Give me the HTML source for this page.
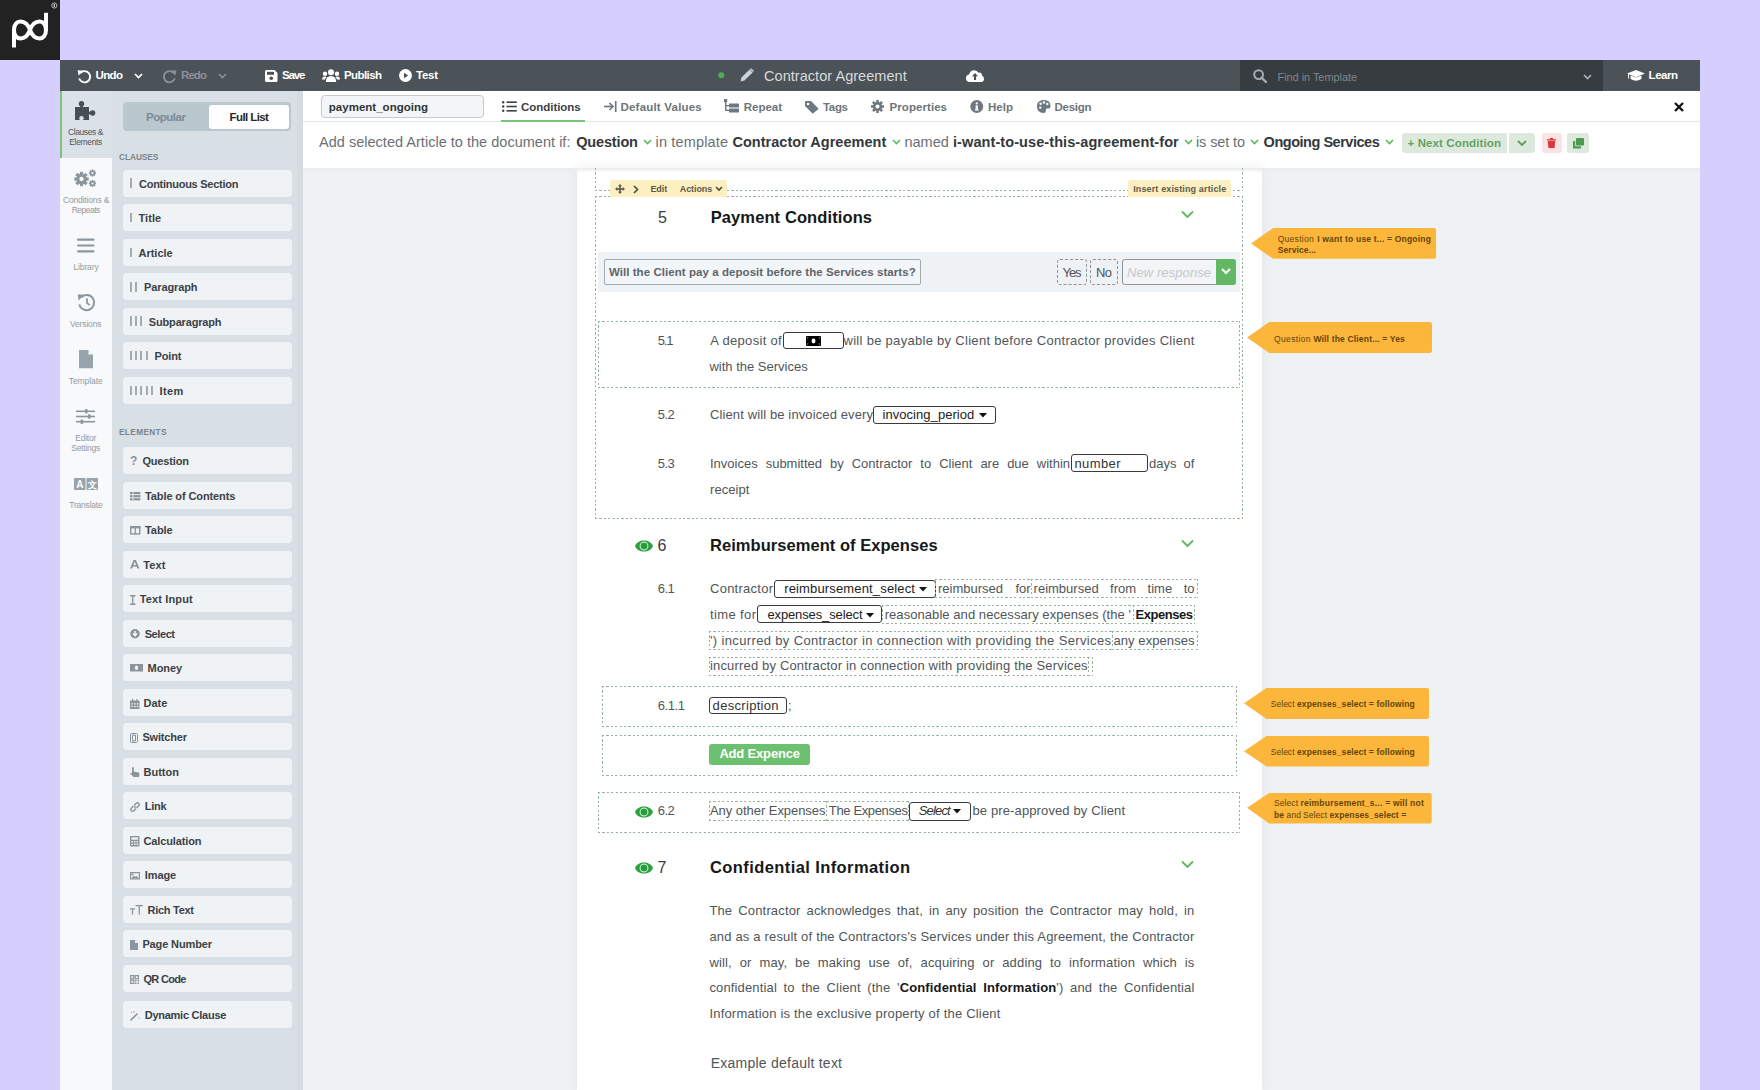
<!DOCTYPE html>
<html><head><meta charset="utf-8"><style>
html,body{margin:0;padding:0;}
body{width:1760px;height:1090px;overflow:hidden;position:relative;background:#d6cefc;font-family:"Liberation Sans", sans-serif;}
.t{position:absolute;white-space:pre;}
svg{overflow:visible}
</style></head><body>
<div style="position:absolute;left:0px;top:0px;width:60px;height:60px;background:#222223;"></div>
<svg style="position:absolute;left:0px;top:0px;" width="60" height="60" viewBox="0 0 60 60">
<g fill="none" stroke="#fff" stroke-width="4">
<path d="M14 47.5 V30"/>
<path d="M14 30 C14 18.5, 26 19, 30 30 C34 41, 46 41.5, 46 30 C46 18.5, 34 19, 30 30 C26 41, 14 41.5, 14 30"/>
<path d="M46 12.8 V31"/>
</g>
<circle cx="54.3" cy="5.5" r="2.6" fill="none" stroke="#c8c8c8" stroke-width="0.9"/>
<rect x="53.6" y="4.1" width="1.4" height="2.8" fill="#c8c8c8"/>
</svg>
<div style="position:absolute;left:60px;top:60px;width:1640px;height:31px;background:#4b5258;"></div>
<div style="position:absolute;left:1240px;top:60px;width:363px;height:31px;background:#363c40;"></div>
<div style="position:absolute;left:60px;top:91px;width:1640px;height:999px;background:#eff2f5;"></div>
<div style="position:absolute;left:60px;top:91px;width:52px;height:999px;background:#f7f9fa;"></div>
<div style="position:absolute;left:60px;top:91px;width:52px;height:67px;background:#dbe2e7;"></div>
<div style="position:absolute;left:60px;top:91px;width:2px;height:67px;background:#7cc47e;"></div>
<div style="position:absolute;left:112px;top:91px;width:191px;height:999px;background:#d8dfe5;"></div>
<div style="position:absolute;left:297px;top:91px;width:6px;height:999px;background:#d4dbe1;"></div>
<div style="position:absolute;left:303px;top:91px;width:1397px;height:77px;background:#fff;"></div>
<div style="position:absolute;left:303px;top:121px;width:1397px;height:1px;background:#e4e7ea;"></div>
<div style="position:absolute;left:321px;top:95px;width:163px;height:23px;background:#f3f5f7;border:1px solid #c3cad0;border-radius:4px;box-sizing:border-box;"></div>
<div style="position:absolute;left:501px;top:119.5px;width:84px;height:2.5px;background:#74c477;"></div>
<div style="position:absolute;left:123px;top:102px;width:168px;height:29px;background:#b9c7cf;border-radius:4px;"></div>
<div style="position:absolute;left:209px;top:105px;width:80px;height:24px;background:#fff;border-radius:3px;"></div>
<div style="position:absolute;left:123px;top:169.5px;width:169px;height:27.0px;background:#f0f3f5;border-radius:4px;"></div>
<div style="position:absolute;left:123px;top:204px;width:169px;height:27px;background:#f0f3f5;border-radius:4px;"></div>
<div style="position:absolute;left:123px;top:238.5px;width:169px;height:27.0px;background:#f0f3f5;border-radius:4px;"></div>
<div style="position:absolute;left:123px;top:273px;width:169px;height:27px;background:#f0f3f5;border-radius:4px;"></div>
<div style="position:absolute;left:123px;top:307.5px;width:169px;height:27.0px;background:#f0f3f5;border-radius:4px;"></div>
<div style="position:absolute;left:123px;top:342px;width:169px;height:27px;background:#f0f3f5;border-radius:4px;"></div>
<div style="position:absolute;left:123px;top:376.5px;width:169px;height:27.0px;background:#f0f3f5;border-radius:4px;"></div>
<div style="position:absolute;left:123px;top:447px;width:169px;height:27px;background:#f0f3f5;border-radius:4px;"></div>
<div style="position:absolute;left:123px;top:481.5px;width:169px;height:27.0px;background:#f0f3f5;border-radius:4px;"></div>
<div style="position:absolute;left:123px;top:516px;width:169px;height:27px;background:#f0f3f5;border-radius:4px;"></div>
<div style="position:absolute;left:123px;top:550.5px;width:169px;height:27.0px;background:#f0f3f5;border-radius:4px;"></div>
<div style="position:absolute;left:123px;top:585px;width:169px;height:27px;background:#f0f3f5;border-radius:4px;"></div>
<div style="position:absolute;left:123px;top:619.5px;width:169px;height:27.0px;background:#f0f3f5;border-radius:4px;"></div>
<div style="position:absolute;left:123px;top:654px;width:169px;height:27px;background:#f0f3f5;border-radius:4px;"></div>
<div style="position:absolute;left:123px;top:688.5px;width:169px;height:27.0px;background:#f0f3f5;border-radius:4px;"></div>
<div style="position:absolute;left:123px;top:723px;width:169px;height:27px;background:#f0f3f5;border-radius:4px;"></div>
<div style="position:absolute;left:123px;top:757.5px;width:169px;height:27.0px;background:#f0f3f5;border-radius:4px;"></div>
<div style="position:absolute;left:123px;top:792px;width:169px;height:27px;background:#f0f3f5;border-radius:4px;"></div>
<div style="position:absolute;left:123px;top:826.5px;width:169px;height:27.0px;background:#f0f3f5;border-radius:4px;"></div>
<div style="position:absolute;left:123px;top:861px;width:169px;height:27px;background:#f0f3f5;border-radius:4px;"></div>
<div style="position:absolute;left:123px;top:895.5px;width:169px;height:27.0px;background:#f0f3f5;border-radius:4px;"></div>
<div style="position:absolute;left:123px;top:930px;width:169px;height:27px;background:#f0f3f5;border-radius:4px;"></div>
<div style="position:absolute;left:123px;top:965px;width:169px;height:27px;background:#f0f3f5;border-radius:4px;"></div>
<div style="position:absolute;left:123px;top:1001px;width:169px;height:27px;background:#f0f3f5;border-radius:4px;"></div>
<div style="position:absolute;left:577px;top:168px;width:685px;height:922px;background:#fff;box-shadow:0 0 12px rgba(40,55,70,0.08);"></div>
<div style="position:absolute;left:709.4px;top:900.8px;width:485.1px;height:20px;line-height:20px;font-size:13px;color:#505559;letter-spacing:0.15px;text-align:justify;text-align-last:justify;white-space:nowrap;">The Contractor acknowledges that, in any position the Contractor may hold, in</div>
<div style="position:absolute;left:709.4px;top:926.7px;width:485.1px;height:20px;line-height:20px;font-size:13px;color:#505559;letter-spacing:0.15px;text-align:justify;text-align-last:justify;white-space:nowrap;">and as a result of the Contractors's Services under this Agreement, the Contractor</div>
<div style="position:absolute;left:709.4px;top:952.5px;width:485.1px;height:20px;line-height:20px;font-size:13px;color:#505559;letter-spacing:0.15px;text-align:justify;text-align-last:justify;white-space:nowrap;">will, or may, be making use of, acquiring or adding to information which is</div>
<div style="position:absolute;left:709.4px;top:978.4px;width:485.1px;height:20px;line-height:20px;font-size:13px;color:#505559;letter-spacing:0.15px;text-align:justify;text-align-last:justify;white-space:nowrap;">confidential to the Client (the '<b style="color:#161819">Confidential Information</b>') and the Confidential</div>
<div style="position:absolute;left:303px;top:168px;width:1397px;height:5px;background:linear-gradient(#e9ebed,rgba(239,242,245,0));"></div>
<svg style="position:absolute;left:595px;top:168px;" width="648" height="23" viewBox="0 0 648 23"><g stroke="#98b59a" stroke-width="1" stroke-dasharray="2.2 2.2" shape-rendering="crispEdges"><line x1="0" y1="22.5" x2="648" y2="22.5"/><line x1="0.5" y1="0" x2="0.5" y2="23"/><line x1="647.5" y1="0" x2="647.5" y2="23"/></g></svg>
<svg style="position:absolute;left:595px;top:196px;" width="648" height="323" viewBox="0 0 648 323"><g stroke="#98b59a" stroke-width="1" stroke-dasharray="2.2 2.2" shape-rendering="crispEdges"><line x1="0" y1="0.5" x2="648" y2="0.5"/><line x1="0" y1="322.5" x2="648" y2="322.5"/><line x1="0.5" y1="0" x2="0.5" y2="323"/><line x1="647.5" y1="0" x2="647.5" y2="323"/></g></svg>
<div style="position:absolute;left:610px;top:180px;width:117px;height:17px;background:#fcefc1;border-radius:3px 3px 0 0;"></div>
<div style="position:absolute;left:1128px;top:180px;width:103px;height:17px;background:#fcefc1;border-radius:3px 3px 0 0;"></div>
<div style="position:absolute;left:598px;top:252px;width:642px;height:40px;background:#eef2f5;"></div>
<div style="position:absolute;left:604px;top:259px;width:317px;height:26px;background:#f3f6f8;border:1px solid #a3abb1;border-radius:2px;box-sizing:border-box;"></div>
<div style="position:absolute;left:1057px;top:259px;width:30px;height:26px;border:1px dashed #8d9296;border-radius:3px;box-sizing:border-box;"></div>
<div style="position:absolute;left:1090px;top:259px;width:28px;height:26px;border:1px dashed #8d9296;border-radius:3px;box-sizing:border-box;"></div>
<div style="position:absolute;left:1122px;top:259px;width:114px;height:26px;background:#f2f4f6;border:1.5px solid #8e959a;border-radius:3px;box-sizing:border-box;"></div>
<div style="position:absolute;left:1216px;top:259px;width:20px;height:26px;background:#62b865;border-radius:0 3px 3px 0;"></div>
<svg style="position:absolute;left:1221px;top:268px;" width="10" height="7" viewBox="0 0 10 7"><path d="M1 1 L5 5 L9 1" fill="none" stroke="#fff" stroke-width="2"/></svg>
<svg style="position:absolute;left:598px;top:321px;" width="642" height="67" viewBox="0 0 642 67"><g stroke="#98b59a" stroke-width="1" stroke-dasharray="2.2 2.2" shape-rendering="crispEdges"><line x1="0" y1="0.5" x2="642" y2="0.5"/><line x1="0" y1="66.5" x2="642" y2="66.5"/><line x1="0.5" y1="0" x2="0.5" y2="67"/><line x1="641.5" y1="0" x2="641.5" y2="67"/></g></svg>
<div style="position:absolute;left:783px;top:332px;width:61px;height:17px;border:1px solid #3a3a3a;border-radius:3px;box-sizing:border-box;background:#fff;"></div>
<div style="position:absolute;left:873px;top:406px;width:123px;height:18px;border:1px solid #3a3a3a;border-radius:3px;box-sizing:border-box;background:#fff;"></div>
<div style="position:absolute;left:1071px;top:454px;width:77px;height:18px;border:1px solid #3a3a3a;border-radius:3px;box-sizing:border-box;background:#fff;"></div>
<div style="position:absolute;left:774px;top:580px;width:162px;height:18px;border:1px solid #3a3a3a;border-radius:3px;box-sizing:border-box;background:#fff;"></div>
<div style="position:absolute;left:757px;top:605px;width:125px;height:18px;border:1px solid #3a3a3a;border-radius:3px;box-sizing:border-box;background:#fff;"></div>
<div style="position:absolute;left:709px;top:697px;width:78px;height:17px;border:1px solid #3a3a3a;border-radius:3px;box-sizing:border-box;background:#fff;"></div>
<div style="position:absolute;left:909px;top:802px;width:62px;height:19px;border:1px solid #3a3a3a;border-radius:3px;box-sizing:border-box;background:#fff;"></div>
<svg style="position:absolute;left:935px;top:579px;" width="97" height="19" viewBox="0 0 97 19"><g stroke="#98b59a" stroke-width="1" stroke-dasharray="2.2 2.2" shape-rendering="crispEdges"><line x1="0" y1="0.5" x2="97" y2="0.5"/><line x1="0" y1="18.5" x2="97" y2="18.5"/><line x1="0.5" y1="0" x2="0.5" y2="19"/></g></svg>
<svg style="position:absolute;left:1031px;top:579px;" width="167" height="19" viewBox="0 0 167 19"><g stroke="#98b59a" stroke-width="1" stroke-dasharray="2.2 2.2" shape-rendering="crispEdges"><line x1="0" y1="0.5" x2="167" y2="0.5"/><line x1="0" y1="18.5" x2="167" y2="18.5"/><line x1="0.5" y1="0" x2="0.5" y2="19"/><line x1="166.5" y1="0" x2="166.5" y2="19"/></g></svg>
<svg style="position:absolute;left:882px;top:605px;" width="313" height="19" viewBox="0 0 313 19"><g stroke="#98b59a" stroke-width="1" stroke-dasharray="2.2 2.2" shape-rendering="crispEdges"><line x1="0" y1="0.5" x2="313" y2="0.5"/><line x1="0" y1="18.5" x2="313" y2="18.5"/><line x1="0.5" y1="0" x2="0.5" y2="19"/><line x1="312.5" y1="0" x2="312.5" y2="19"/></g></svg>
<svg style="position:absolute;left:1133px;top:605px;" width="62" height="19" viewBox="0 0 62 19"><g stroke="#98b59a" stroke-width="1" stroke-dasharray="2.2 2.2" shape-rendering="crispEdges"><line x1="0.5" y1="0" x2="0.5" y2="19"/></g></svg>
<svg style="position:absolute;left:709px;top:631px;" width="404" height="19" viewBox="0 0 404 19"><g stroke="#98b59a" stroke-width="1" stroke-dasharray="2.2 2.2" shape-rendering="crispEdges"><line x1="0" y1="0.5" x2="404" y2="0.5"/><line x1="0" y1="18.5" x2="404" y2="18.5"/><line x1="0.5" y1="0" x2="0.5" y2="19"/><line x1="403.5" y1="0" x2="403.5" y2="19"/></g></svg>
<svg style="position:absolute;left:1112px;top:631px;" width="86" height="19" viewBox="0 0 86 19"><g stroke="#98b59a" stroke-width="1" stroke-dasharray="2.2 2.2" shape-rendering="crispEdges"><line x1="0" y1="0.5" x2="86" y2="0.5"/><line x1="0" y1="18.5" x2="86" y2="18.5"/><line x1="85.5" y1="0" x2="85.5" y2="19"/></g></svg>
<svg style="position:absolute;left:709px;top:657px;" width="380" height="19" viewBox="0 0 380 19"><g stroke="#98b59a" stroke-width="1" stroke-dasharray="2.2 2.2" shape-rendering="crispEdges"><line x1="0" y1="0.5" x2="380" y2="0.5"/><line x1="0" y1="18.5" x2="380" y2="18.5"/><line x1="0.5" y1="0" x2="0.5" y2="19"/><line x1="379.5" y1="0" x2="379.5" y2="19"/></g></svg>
<svg style="position:absolute;left:1088px;top:657px;" width="5" height="19" viewBox="0 0 5 19"><g stroke="#98b59a" stroke-width="1" stroke-dasharray="2.2 2.2" shape-rendering="crispEdges"><line x1="0" y1="0.5" x2="5" y2="0.5"/><line x1="0" y1="18.5" x2="5" y2="18.5"/><line x1="4.5" y1="0" x2="4.5" y2="19"/></g></svg>
<svg style="position:absolute;left:602px;top:686px;" width="635" height="41" viewBox="0 0 635 41"><g stroke="#98b59a" stroke-width="1" stroke-dasharray="2.2 2.2" shape-rendering="crispEdges"><line x1="0" y1="0.5" x2="635" y2="0.5"/><line x1="0" y1="40.5" x2="635" y2="40.5"/><line x1="0.5" y1="0" x2="0.5" y2="41"/><line x1="634.5" y1="0" x2="634.5" y2="41"/></g></svg>
<svg style="position:absolute;left:602px;top:735px;" width="635" height="41" viewBox="0 0 635 41"><g stroke="#98b59a" stroke-width="1" stroke-dasharray="2.2 2.2" shape-rendering="crispEdges"><line x1="0" y1="0.5" x2="635" y2="0.5"/><line x1="0" y1="40.5" x2="635" y2="40.5"/><line x1="0.5" y1="0" x2="0.5" y2="41"/><line x1="634.5" y1="0" x2="634.5" y2="41"/></g></svg>
<div style="position:absolute;left:709px;top:744px;width:101px;height:21px;background:#6cc070;border-radius:3px;"></div>
<svg style="position:absolute;left:598px;top:792px;" width="642" height="41" viewBox="0 0 642 41"><g stroke="#98b59a" stroke-width="1" stroke-dasharray="2.2 2.2" shape-rendering="crispEdges"><line x1="0" y1="0.5" x2="642" y2="0.5"/><line x1="0" y1="40.5" x2="642" y2="40.5"/><line x1="0.5" y1="0" x2="0.5" y2="41"/><line x1="641.5" y1="0" x2="641.5" y2="41"/></g></svg>
<svg style="position:absolute;left:709px;top:801px;" width="118" height="20" viewBox="0 0 118 20"><g stroke="#98b59a" stroke-width="1" stroke-dasharray="2.2 2.2" shape-rendering="crispEdges"><line x1="0" y1="0.5" x2="118" y2="0.5"/><line x1="0" y1="19.5" x2="118" y2="19.5"/><line x1="0.5" y1="0" x2="0.5" y2="20"/><line x1="117.5" y1="0" x2="117.5" y2="20"/></g></svg>
<svg style="position:absolute;left:827px;top:801px;" width="82" height="20" viewBox="0 0 82 20"><g stroke="#98b59a" stroke-width="1" stroke-dasharray="2.2 2.2" shape-rendering="crispEdges"><line x1="0" y1="0.5" x2="82" y2="0.5"/><line x1="0" y1="19.5" x2="82" y2="19.5"/><line x1="81.5" y1="0" x2="81.5" y2="20"/></g></svg>
<svg style="position:absolute;left:1250.5px;top:228.4px;" width="185.0999999999999" height="30.799999999999983" viewBox="0 0 185.0999999999999 30.799999999999983"><path d="M0 15.400000000000006 L22.09999999999991 0 H183.0999999999999 Q185.0999999999999 0 185.0999999999999 2 V28.799999999999983 Q185.0999999999999 30.799999999999983 183.0999999999999 30.799999999999983 H22.09999999999991 Z" fill="#fbb63b"/></svg>
<svg style="position:absolute;left:1247.3px;top:322.3px;" width="185.0" height="30.899999999999977" viewBox="0 0 185.0 30.899999999999977"><path d="M0 15.5 L22.299999999999955 0 H183.0 Q185.0 0 185.0 2 V28.899999999999977 Q185.0 30.899999999999977 183.0 30.899999999999977 H22.299999999999955 Z" fill="#fbb63b"/></svg>
<svg style="position:absolute;left:1244px;top:687.6px;" width="185" height="30.899999999999977" viewBox="0 0 185 30.899999999999977"><path d="M0 15.199999999999932 L22.40000000000009 0 H183 Q185 0 185 2 V28.899999999999977 Q185 30.899999999999977 183 30.899999999999977 H22.40000000000009 Z" fill="#fbb63b"/></svg>
<svg style="position:absolute;left:1244px;top:736.2px;" width="185" height="30.399999999999977" viewBox="0 0 185 30.399999999999977"><path d="M0 15.299999999999955 L22.40000000000009 0 H183 Q185 0 185 2 V28.399999999999977 Q185 30.399999999999977 183 30.399999999999977 H22.40000000000009 Z" fill="#fbb63b"/></svg>
<svg style="position:absolute;left:1247.3px;top:793px;" width="184.70000000000005" height="30.600000000000023" viewBox="0 0 184.70000000000005 30.600000000000023"><path d="M0 14.799999999999955 L22.100000000000136 0 H182.70000000000005 Q184.70000000000005 0 184.70000000000005 2 V28.600000000000023 Q184.70000000000005 30.600000000000023 182.70000000000005 30.600000000000023 H22.100000000000136 Z" fill="#fbb63b"/></svg>
<svg style="position:absolute;left:635px;top:540px;" width="18" height="12" viewBox="0 0 18 12"><path d="M0 6 C2.8 -1.4, 15.2 -1.4, 18 6 C15.2 13.4, 2.8 13.4, 0 6 Z" fill="#2e9e43"/><circle cx="9" cy="6" r="3.9" fill="none" stroke="#b9efc2" stroke-width="1.1"/><circle cx="9" cy="6" r="2.9" fill="#2a9a3f"/></svg>
<svg style="position:absolute;left:635px;top:805.5px;" width="18" height="12" viewBox="0 0 18 12"><path d="M0 6 C2.8 -1.4, 15.2 -1.4, 18 6 C15.2 13.4, 2.8 13.4, 0 6 Z" fill="#2e9e43"/><circle cx="9" cy="6" r="3.9" fill="none" stroke="#b9efc2" stroke-width="1.1"/><circle cx="9" cy="6" r="2.9" fill="#2a9a3f"/></svg>
<svg style="position:absolute;left:635px;top:862px;" width="18" height="12" viewBox="0 0 18 12"><path d="M0 6 C2.8 -1.4, 15.2 -1.4, 18 6 C15.2 13.4, 2.8 13.4, 0 6 Z" fill="#2e9e43"/><circle cx="9" cy="6" r="3.9" fill="none" stroke="#b9efc2" stroke-width="1.1"/><circle cx="9" cy="6" r="2.9" fill="#2a9a3f"/></svg>
<svg style="position:absolute;left:1181px;top:210px;" width="13" height="9" viewBox="0 0 13 9"><path d="M1 1.5 L6.5 7 L12 1.5" fill="none" stroke="#5cb85c" stroke-width="1.8"/></svg>
<svg style="position:absolute;left:1181px;top:538.5px;" width="13" height="9" viewBox="0 0 13 9"><path d="M1 1.5 L6.5 7 L12 1.5" fill="none" stroke="#5cb85c" stroke-width="1.8"/></svg>
<svg style="position:absolute;left:1181px;top:860px;" width="13" height="9" viewBox="0 0 13 9"><path d="M1 1.5 L6.5 7 L12 1.5" fill="none" stroke="#5cb85c" stroke-width="1.8"/></svg>
<svg style="position:absolute;left:806px;top:336px;" width="15" height="10" viewBox="0 0 15 10"><rect x="0" y="0" width="15" height="10" rx="1" fill="#000"/><ellipse cx="7.5" cy="5" rx="2" ry="2.4" fill="#fff"/><rect x="1.2" y="1.2" width="1" height="1.5" fill="#888"/><rect x="12.8" y="1.2" width="1" height="1.5" fill="#888"/><rect x="1.2" y="7.3" width="1" height="1.5" fill="#888"/><rect x="12.8" y="7.3" width="1" height="1.5" fill="#888"/></svg>
<svg style="position:absolute;left:978.5px;top:413px;" width="8" height="5" viewBox="0 0 8 5"><path d="M0 0 H8 L4 4.5 Z" fill="#111"/></svg>
<svg style="position:absolute;left:918.5px;top:586.5px;" width="8" height="5" viewBox="0 0 8 5"><path d="M0 0 H8 L4 4.5 Z" fill="#111"/></svg>
<svg style="position:absolute;left:865.5px;top:612.5px;" width="8" height="5" viewBox="0 0 8 5"><path d="M0 0 H8 L4 4.5 Z" fill="#111"/></svg>
<svg style="position:absolute;left:953px;top:809px;" width="8" height="5" viewBox="0 0 8 5"><path d="M0 0 H8 L4 4.5 Z" fill="#111"/></svg>
<svg style="position:absolute;left:614.5px;top:183.5px;" width="10" height="10" viewBox="0 0 10 10"><g fill="#5a5a4a"><path d="M5 0 L7 2.3 H3 Z"/><path d="M5 10 L7 7.7 H3 Z"/><path d="M0 5 L2.3 3 V7 Z"/><path d="M10 5 L7.7 3 V7 Z"/><rect x="4.2" y="2" width="1.6" height="6"/><rect x="2" y="4.2" width="6" height="1.6"/></g></svg>
<svg style="position:absolute;left:633px;top:185px;" width="6" height="9" viewBox="0 0 6 9"><path d="M1 1 L4.5 4.5 L1 8" fill="none" stroke="#4a4a3e" stroke-width="1.6"/></svg>
<svg style="position:absolute;left:714.5px;top:186px;" width="8" height="6" viewBox="0 0 8 6"><path d="M1 1 L4 4 L7 1" fill="none" stroke="#4a4a3e" stroke-width="1.6"/></svg>
<svg style="position:absolute;left:77px;top:69px;" width="14" height="14" viewBox="0 0 14 14"><path d="M3.2 4.2 A5.6 5.6 0 1 1 2.2 9.5" fill="none" stroke="#fff" stroke-width="1.9"/><path d="M0.6 1.2 L6.4 1.8 L1.6 6.6 Z" fill="#fff"/></svg>
<svg style="position:absolute;left:133.5px;top:72.5px;" width="9" height="6" viewBox="0 0 9 6"><path d="M1 1 L4.5 4.5 L8 1" fill="none" stroke="#fff" stroke-width="1.7"/></svg>
<svg style="position:absolute;left:163px;top:69px;" width="14" height="14" viewBox="0 0 14 14"><path d="M10.8 4.2 A5.6 5.6 0 1 0 11.8 9.5" fill="none" stroke="#8b9197" stroke-width="1.9"/><path d="M13.4 1.2 L7.6 1.8 L12.4 6.6 Z" fill="#8b9197"/></svg>
<svg style="position:absolute;left:217.5px;top:72.5px;" width="9" height="6" viewBox="0 0 9 6"><path d="M1 1 L4.5 4.5 L8 1" fill="none" stroke="#8b9197" stroke-width="1.7"/></svg>
<svg style="position:absolute;left:265px;top:70px;" width="12.5" height="12" viewBox="0 0 12.5 12"><path d="M0 1.5 Q0 0 1.5 0 H9.5 L12.5 3 V10.5 Q12.5 12 11 12 H1.5 Q0 12 0 10.5 Z" fill="#fff"/><rect x="2" y="1.8" width="7" height="3" fill="#4b5258"/><circle cx="6.25" cy="8.3" r="1.8" fill="#4b5258"/></svg>
<svg style="position:absolute;left:322px;top:69px;" width="18" height="13" viewBox="0 0 18 13"><g fill="#fff"><circle cx="9" cy="3.2" r="3"/><path d="M3.8 13 Q3.8 7 9 7 Q14.2 7 14.2 13 Z"/><circle cx="3" cy="4.8" r="2.2"/><path d="M0 10.5 Q0 7.5 3 7.5 Q4 7.5 4.6 8 Q3 9.5 3 10.5 Z"/><circle cx="15" cy="4.8" r="2.2"/><path d="M18 10.5 Q18 7.5 15 7.5 Q14 7.5 13.4 8 Q15 9.5 15 10.5 Z"/></g></svg>
<svg style="position:absolute;left:398.5px;top:69px;" width="13" height="13" viewBox="0 0 13 13"><circle cx="6.5" cy="6.5" r="6.5" fill="#fff"/><path d="M5 3.8 L9.2 6.5 L5 9.2 Z" fill="#4b5258"/></svg>
<svg style="position:absolute;left:718px;top:72px;" width="6.5" height="6.5" viewBox="0 0 6.5 6.5"><circle cx="3.25" cy="3.25" r="3" fill="#4cae4f"/></svg>
<svg style="position:absolute;left:740px;top:68px;" width="14" height="14" viewBox="0 0 14 14"><path d="M0.5 13.5 L1.4 9.6 L9.6 1.4 L12.6 4.4 L4.4 12.6 Z" fill="#c9d3d9"/><path d="M10.3 0.7 Q11 0 11.7 0.7 L13.3 2.3 Q14 3 13.3 3.7 L12.9 4.1 L9.9 1.1 Z" fill="#c9d3d9"/></svg>
<svg style="position:absolute;left:966px;top:69px;" width="18" height="13" viewBox="0 0 18 13"><path d="M4 13 Q0 13 0 9.2 Q0 6 3.2 5.6 Q3.6 1.8 7.6 1.2 Q11 0.8 12.4 3.8 Q14.2 3 15.4 4.4 Q16.2 5.4 15.9 6.6 Q18 7.4 18 9.9 Q18 13 14.5 13 Z" fill="#fff"/><path d="M9 4 L12 7.3 H10.1 V11 H7.9 V7.3 H6 Z" fill="#4b5258"/></svg>
<svg style="position:absolute;left:1253px;top:69px;" width="14" height="14" viewBox="0 0 14 14"><circle cx="5.6" cy="5.6" r="4.4" fill="none" stroke="#a6adb2" stroke-width="2"/><path d="M8.8 8.8 L13 13" stroke="#a6adb2" stroke-width="2.4" stroke-linecap="round"/></svg>
<svg style="position:absolute;left:1582.5px;top:73.5px;" width="9" height="6" viewBox="0 0 9 6"><path d="M1 1 L4.5 4.5 L8 1" fill="none" stroke="#aab0b4" stroke-width="1.7"/></svg>
<svg style="position:absolute;left:1627px;top:70px;" width="18" height="11" viewBox="0 0 18 11"><path d="M9 0 L18 3.6 L9 7.2 L0 3.6 Z" fill="#fff"/><path d="M3.6 5.4 V9 Q9 12.5 14.4 9 V5.4 L9 7.6 Z" fill="#fff"/><path d="M1.6 4.2 V8.5" stroke="#fff" stroke-width="1"/></svg>
<svg style="position:absolute;left:1674px;top:102px;" width="10" height="10" viewBox="0 0 10 10"><path d="M1 1 L9 9 M9 1 L1 9" stroke="#111" stroke-width="2.3"/></svg>
<svg style="position:absolute;left:502px;top:101px;" width="15" height="11" viewBox="0 0 15 11"><g fill="#3c4247"><circle cx="1.2" cy="1.2" r="1.2"/><circle cx="1.2" cy="5.5" r="1.2"/><circle cx="1.2" cy="9.8" r="1.2"/><rect x="4.5" y="0.4" width="10.3" height="1.6"/><rect x="4.5" y="4.7" width="10.3" height="1.6"/><rect x="4.5" y="9" width="10.3" height="1.6"/></g></svg>
<svg style="position:absolute;left:603.5px;top:101px;" width="13" height="11" viewBox="0 0 13 11"><g fill="none" stroke="#6d7880" stroke-width="1.7"><path d="M0 5.5 H9"/><path d="M5.5 2 L9 5.5 L5.5 9"/><path d="M11.7 0 V11"/></g></svg>
<svg style="position:absolute;left:724px;top:99px;" width="15" height="14" viewBox="0 0 15 14"><g fill="#6d7880"><rect x="0" y="0" width="3.2" height="3.2"/><rect x="1" y="2" width="1.4" height="10"/><rect x="1" y="6" width="4" height="1.4"/><rect x="1" y="10.6" width="4" height="1.4"/><rect x="5" y="4.6" width="10" height="4" rx="0.6"/><rect x="5" y="9.4" width="10" height="4" rx="0.6"/></g></svg>
<svg style="position:absolute;left:805px;top:100.5px;" width="13.5" height="12.5" viewBox="0 0 13.5 12.5"><path d="M0 1 Q0 0 1 0 H6 L13.2 7.2 Q13.7 7.7 13.2 8.2 L8.2 12.2 Q7.7 12.7 7.2 12.2 L0 5 Z" fill="#6d7880"/><circle cx="3" cy="3" r="1.3" fill="#fff"/></svg>
<svg style="position:absolute;left:871px;top:100px;" width="13" height="13" viewBox="0 0 13 13"><g fill="#6d7880"><circle cx="6.5" cy="6.5" r="4.6"/><g stroke="#6d7880" stroke-width="2.6"><path d="M6.5 0 V13"/><path d="M0 6.5 H13"/><path d="M1.9 1.9 L11.1 11.1"/><path d="M11.1 1.9 L1.9 11.1"/></g></g><circle cx="6.5" cy="6.5" r="2" fill="#fff"/></svg>
<svg style="position:absolute;left:970px;top:100px;" width="13.5" height="13" viewBox="0 0 13.5 13"><circle cx="6.75" cy="6.5" r="6.5" fill="#6d7880"/><circle cx="6.75" cy="3.4" r="1.1" fill="#fff"/><rect x="5.6" y="5.4" width="2.3" height="4.4" fill="#fff"/><rect x="5" y="9.4" width="3.5" height="1.2" fill="#fff"/></svg>
<svg style="position:absolute;left:1036.5px;top:100px;" width="13.5" height="13" viewBox="0 0 13.5 13"><path d="M6.8 0 Q13.5 0 13.5 6 Q13.5 8.8 10.6 8.6 Q8.8 8.5 8.8 10 Q9.2 13 6.5 13 Q0 13 0 6.5 Q0 0 6.8 0 Z" fill="#6d7880"/><g fill="#fff"><circle cx="3.3" cy="7.6" r="1.2"/><circle cx="3.6" cy="3.8" r="1.2"/><circle cx="7" cy="2.5" r="1.2"/><circle cx="10.3" cy="4" r="1.2"/></g></svg>
<svg style="position:absolute;left:643px;top:139px;" width="9" height="6" viewBox="0 0 9 6"><path d="M1 1 L4.5 4.5 L8 1" fill="none" stroke="#5cb85c" stroke-width="1.6"/></svg>
<svg style="position:absolute;left:892px;top:139px;" width="9" height="6" viewBox="0 0 9 6"><path d="M1 1 L4.5 4.5 L8 1" fill="none" stroke="#5cb85c" stroke-width="1.6"/></svg>
<svg style="position:absolute;left:1184px;top:139px;" width="9" height="6" viewBox="0 0 9 6"><path d="M1 1 L4.5 4.5 L8 1" fill="none" stroke="#5cb85c" stroke-width="1.6"/></svg>
<svg style="position:absolute;left:1250px;top:139px;" width="9" height="6" viewBox="0 0 9 6"><path d="M1 1 L4.5 4.5 L8 1" fill="none" stroke="#5cb85c" stroke-width="1.6"/></svg>
<svg style="position:absolute;left:1384.5px;top:139px;" width="9" height="6" viewBox="0 0 9 6"><path d="M1 1 L4.5 4.5 L8 1" fill="none" stroke="#5cb85c" stroke-width="1.6"/></svg>
<div style="position:absolute;left:1402px;top:132.5px;width:105px;height:20.5px;background:#dde9dc;border-radius:3px 0 0 3px;"></div>
<div style="position:absolute;left:1509px;top:132.5px;width:25.5px;height:20.5px;background:#dde9dc;border-radius:0 3px 3px 0;"></div>
<svg style="position:absolute;left:1517px;top:140px;" width="10" height="6" viewBox="0 0 10 6"><path d="M1 1 L5 5 L9 1" fill="none" stroke="#5f9a62" stroke-width="1.8"/></svg>
<div style="position:absolute;left:1541.5px;top:132.5px;width:20.0px;height:20.5px;background:#fde2e4;border-radius:3px;"></div>
<svg style="position:absolute;left:1547px;top:138px;" width="9" height="10" viewBox="0 0 9 10"><path d="M0 1.2 H9 V2.4 H0 Z M3 0 H6 V1.2 H3 Z" fill="#d9383f"/><path d="M0.8 3 H8.2 L7.6 10 H1.4 Z" fill="#d9383f"/></svg>
<div style="position:absolute;left:1567px;top:132.5px;width:22px;height:20.5px;background:#dde9dc;border-radius:3px;"></div>
<svg style="position:absolute;left:1572.8px;top:137.7px;" width="11" height="10.5" viewBox="0 0 11 10.5"><rect x="3" y="0" width="8" height="7.5" rx="1" fill="#4c9a50"/><path d="M0 3.5 Q0 3 0.5 3 H2.2 V8.3 H8 V10 Q8 10.5 7.5 10.5 H0.5 Q0 10.5 0 10 Z" fill="#4c9a50"/></svg>
<svg style="position:absolute;left:75px;top:101px;" width="21" height="19" viewBox="0 0 21 19"><g fill="#474e54"><rect x="0" y="6" width="14" height="13"/><circle cx="6.5" cy="2.8" r="2.7"/><rect x="5.2" y="3" width="2.6" height="4"/><circle cx="17.6" cy="12" r="2.7"/><rect x="13" y="10.7" width="4" height="2.6"/></g><circle cx="6.5" cy="17.2" r="2.2" fill="#dbe2e7"/></svg>
<svg style="position:absolute;left:73.8px;top:169px;" width="24" height="18.5" viewBox="0 0 24 18.5"><circle cx="7.5" cy="10" r="5.184" fill="#8c969d"/><line x1="7.5" y1="10" x2="14.70" y2="10.00" stroke="#8c969d" stroke-width="3.24"/><line x1="7.5" y1="10" x2="12.59" y2="15.09" stroke="#8c969d" stroke-width="3.24"/><line x1="7.5" y1="10" x2="7.50" y2="17.20" stroke="#8c969d" stroke-width="3.24"/><line x1="7.5" y1="10" x2="2.41" y2="15.09" stroke="#8c969d" stroke-width="3.24"/><line x1="7.5" y1="10" x2="0.30" y2="10.00" stroke="#8c969d" stroke-width="3.24"/><line x1="7.5" y1="10" x2="2.41" y2="4.91" stroke="#8c969d" stroke-width="3.24"/><line x1="7.5" y1="10" x2="7.50" y2="2.80" stroke="#8c969d" stroke-width="3.24"/><line x1="7.5" y1="10" x2="12.59" y2="4.91" stroke="#8c969d" stroke-width="3.24"/><circle cx="7.5" cy="10" r="2.16" fill="#f7f9fa"/><circle cx="18.5" cy="4" r="2.592" fill="#8c969d"/><line x1="18.5" y1="4" x2="22.10" y2="4.00" stroke="#8c969d" stroke-width="1.62"/><line x1="18.5" y1="4" x2="21.05" y2="6.55" stroke="#8c969d" stroke-width="1.62"/><line x1="18.5" y1="4" x2="18.50" y2="7.60" stroke="#8c969d" stroke-width="1.62"/><line x1="18.5" y1="4" x2="15.95" y2="6.55" stroke="#8c969d" stroke-width="1.62"/><line x1="18.5" y1="4" x2="14.90" y2="4.00" stroke="#8c969d" stroke-width="1.62"/><line x1="18.5" y1="4" x2="15.95" y2="1.45" stroke="#8c969d" stroke-width="1.62"/><line x1="18.5" y1="4" x2="18.50" y2="0.40" stroke="#8c969d" stroke-width="1.62"/><line x1="18.5" y1="4" x2="21.05" y2="1.45" stroke="#8c969d" stroke-width="1.62"/><circle cx="18.5" cy="4" r="1.08" fill="#f7f9fa"/><circle cx="18.5" cy="14.5" r="2.592" fill="#8c969d"/><line x1="18.5" y1="14.5" x2="22.10" y2="14.50" stroke="#8c969d" stroke-width="1.62"/><line x1="18.5" y1="14.5" x2="21.05" y2="17.05" stroke="#8c969d" stroke-width="1.62"/><line x1="18.5" y1="14.5" x2="18.50" y2="18.10" stroke="#8c969d" stroke-width="1.62"/><line x1="18.5" y1="14.5" x2="15.95" y2="17.05" stroke="#8c969d" stroke-width="1.62"/><line x1="18.5" y1="14.5" x2="14.90" y2="14.50" stroke="#8c969d" stroke-width="1.62"/><line x1="18.5" y1="14.5" x2="15.95" y2="11.95" stroke="#8c969d" stroke-width="1.62"/><line x1="18.5" y1="14.5" x2="18.50" y2="10.90" stroke="#8c969d" stroke-width="1.62"/><line x1="18.5" y1="14.5" x2="21.05" y2="11.95" stroke="#8c969d" stroke-width="1.62"/><circle cx="18.5" cy="14.5" r="1.08" fill="#f7f9fa"/></svg>
<svg style="position:absolute;left:77.4px;top:238px;" width="17.5" height="15" viewBox="0 0 17.5 15"><g fill="#8c969d"><rect x="0" y="0.6" width="17.5" height="2.2" rx="1"/><rect x="0" y="6.4" width="17.5" height="2.2" rx="1"/><rect x="0" y="12.2" width="17.5" height="2.2" rx="1"/></g></svg>
<svg style="position:absolute;left:76.5px;top:293px;" width="19" height="19" viewBox="0 0 19 19"><path d="M4.2 4.2 A7.6 7.6 0 1 1 2.2 11.5" fill="none" stroke="#8c969d" stroke-width="2"/><path d="M0.8 1.2 L7.2 1.8 L1.6 7.6 Z" fill="#8c969d"/><path d="M10 5.2 V9.8 L12.6 12.2" fill="none" stroke="#8c969d" stroke-width="1.8"/></svg>
<svg style="position:absolute;left:79px;top:350.3px;" width="14" height="18.3" viewBox="0 0 14 18.3"><path d="M0 0 H9.5 L14 4.5 V18.3 H0 Z" fill="#98a4ab"/><path d="M9.5 0 V4.5 H14" fill="#f7f9fa"/></svg>
<svg style="position:absolute;left:76.2px;top:409px;" width="19" height="15" viewBox="0 0 19 15"><g fill="#8c969d"><rect x="0" y="1.5" width="19" height="1.6"/><rect x="0" y="6.7" width="19" height="1.6"/><rect x="0" y="11.9" width="19" height="1.6"/><rect x="9" y="0" width="2.6" height="4.6" rx="1"/><rect x="12" y="5.2" width="2.6" height="4.6" rx="1"/><rect x="4.5" y="10.4" width="2.6" height="4.6" rx="1"/></g></svg>
<svg style="position:absolute;left:74px;top:478px;" width="24" height="12" viewBox="0 0 24 12"><rect x="0" y="0" width="11.5" height="12" rx="1" fill="#98a4ab"/><rect x="12.5" y="0" width="11.5" height="12" rx="1" fill="#98a4ab"/><text x="5.75" y="10" font-size="10" font-weight="700" fill="#fff" text-anchor="middle" font-family="Liberation Sans">A</text><text x="18.25" y="10" font-size="9" font-weight="700" fill="#fff" text-anchor="middle" font-family="Liberation Sans">文</text></svg>
<div style="position:absolute;left:130px;top:178px;width:2px;height:10px;background:#a3abb0;"></div>
<div style="position:absolute;left:130px;top:213px;width:2px;height:9px;background:#a3abb0;"></div>
<div style="position:absolute;left:130px;top:248px;width:2px;height:9px;background:#a3abb0;"></div>
<div style="position:absolute;left:130px;top:282px;width:2px;height:10px;background:#a3abb0;"></div>
<div style="position:absolute;left:135px;top:282px;width:2px;height:10px;background:#a3abb0;"></div>
<div style="position:absolute;left:130px;top:316px;width:2px;height:10px;background:#a3abb0;"></div>
<div style="position:absolute;left:135px;top:316px;width:2px;height:10px;background:#a3abb0;"></div>
<div style="position:absolute;left:140px;top:316px;width:2px;height:10px;background:#a3abb0;"></div>
<div style="position:absolute;left:130px;top:351px;width:2px;height:9px;background:#a3abb0;"></div>
<div style="position:absolute;left:135px;top:351px;width:2px;height:9px;background:#a3abb0;"></div>
<div style="position:absolute;left:140px;top:351px;width:2px;height:9px;background:#a3abb0;"></div>
<div style="position:absolute;left:146px;top:351px;width:2px;height:9px;background:#a3abb0;"></div>
<div style="position:absolute;left:130px;top:386px;width:2px;height:9px;background:#a3abb0;"></div>
<div style="position:absolute;left:135px;top:386px;width:2px;height:9px;background:#a3abb0;"></div>
<div style="position:absolute;left:140px;top:386px;width:2px;height:9px;background:#a3abb0;"></div>
<div style="position:absolute;left:146px;top:386px;width:2px;height:9px;background:#a3abb0;"></div>
<div style="position:absolute;left:151px;top:386px;width:2px;height:9px;background:#a3abb0;"></div>
<div style="position:absolute;left:130px;top:453px;font-size:12px;line-height:16px;font-weight:700;color:#8a949b;">?</div>
<svg style="position:absolute;left:130px;top:491.5px;" width="10.5" height="8.5" viewBox="0 0 10.5 8.5"><g fill="#8a949b"><rect x="0" y="0" width="2.6" height="2.2"/><rect x="3.4" y="0" width="7" height="2.2"/><rect x="0" y="3.1" width="2.6" height="2.2"/><rect x="3.4" y="3.1" width="7" height="2.2"/><rect x="0" y="6.2" width="2.6" height="2.2"/><rect x="3.4" y="6.2" width="7" height="2.2"/></g></svg>
<svg style="position:absolute;left:130px;top:526px;" width="10.5" height="8.5" viewBox="0 0 10.5 8.5"><rect x="0.7" y="0.7" width="9" height="7.2" fill="none" stroke="#8a949b" stroke-width="1.4"/><rect x="0" y="0" width="10.5" height="2.4" fill="#8a949b"/><rect x="4.6" y="0" width="1.3" height="8.5" fill="#8a949b"/></svg>
<svg style="position:absolute;left:130px;top:560.0px;" width="9.5" height="8.5" viewBox="0 0 9.5 8.5"><path d="M3.6 0 H5.9 L9.5 8.5 H7.4 L6.6 6.5 H2.9 L2.1 8.5 H0 Z M3.4 5 H6.1 L4.75 1.8 Z" fill="#8a949b"/></svg>
<svg style="position:absolute;left:129.7px;top:594.5px;" width="5.5" height="10" viewBox="0 0 5.5 10"><path d="M0 0.7 H5.5 M0 9.3 H5.5 M2.75 0.7 V9.3" stroke="#8a949b" stroke-width="1.4" fill="none"/></svg>
<svg style="position:absolute;left:130px;top:629.0px;" width="10" height="9.5" viewBox="0 0 10 9.5"><circle cx="5" cy="4.75" r="4.75" fill="#8a949b"/><path d="M5 2 V6 M2.8 4.4 L5 6.8 L7.2 4.4" stroke="#fff" stroke-width="1.4" fill="none"/></svg>
<svg style="position:absolute;left:129.7px;top:664px;" width="13" height="7.5" viewBox="0 0 13 7.5"><rect x="0" y="0" width="13" height="7.5" fill="#8a949b"/><ellipse cx="6.5" cy="3.75" rx="1.7" ry="2.2" fill="#f0f3f5"/></svg>
<svg style="position:absolute;left:130px;top:698.5px;" width="9.5" height="10" viewBox="0 0 9.5 10"><rect x="0" y="1.5" width="9.5" height="8.5" fill="#8a949b"/><rect x="2" y="0" width="1.2" height="2" fill="#8a949b"/><rect x="6.3" y="0" width="1.2" height="2" fill="#8a949b"/><g fill="#f0f3f5"><rect x="1.2" y="4.2" width="1.6" height="1.3"/><rect x="4" y="4.2" width="1.6" height="1.3"/><rect x="6.8" y="4.2" width="1.6" height="1.3"/><rect x="1.2" y="6.8" width="1.6" height="1.3"/><rect x="4" y="6.8" width="1.6" height="1.3"/><rect x="6.8" y="6.8" width="1.6" height="1.3"/></g></svg>
<svg style="position:absolute;left:130px;top:732.5px;" width="8" height="10" viewBox="0 0 8 10"><rect x="0.5" y="0.5" width="7" height="9" rx="1" fill="none" stroke="#8a949b" stroke-width="1"/><rect x="2.5" y="2.2" width="3" height="5.6" fill="none" stroke="#8a949b" stroke-width="1"/></svg>
<svg style="position:absolute;left:130px;top:767.0px;" width="9.5" height="10" viewBox="0 0 9.5 10"><path d="M2 0.8 Q2 0 2.9 0 Q3.8 0 3.8 0.8 V4.5 L8.5 5.6 Q9.5 6 9.4 7.2 L9 10 H3.5 L0.4 6.8 Q0 6.2 0.6 5.8 Q1.2 5.5 2 6.2 Z" fill="#8a949b"/></svg>
<svg style="position:absolute;left:130px;top:802px;" width="10" height="10" viewBox="0 0 10 10"><g fill="none" stroke="#8a949b" stroke-width="1.4"><path d="M4.3 5.7 L5.7 4.3"/><path d="M3.4 4.1 L1.6 5.9 Q0 7.5 1.3 8.7 Q2.5 10 4.1 8.4 L5.9 6.6"/><path d="M4.1 3.4 L5.9 1.6 Q7.5 0 8.7 1.3 Q10 2.5 8.4 4.1 L6.6 5.9"/></g></svg>
<svg style="position:absolute;left:130px;top:836.0px;" width="9.5" height="10.5" viewBox="0 0 9.5 10.5"><rect x="0" y="0" width="9.5" height="10.5" rx="1" fill="#8a949b"/><rect x="1.4" y="1.4" width="6.7" height="2.3" fill="#f0f3f5"/><g fill="#f0f3f5"><rect x="1.4" y="5" width="1.6" height="1.4"/><rect x="4" y="5" width="1.6" height="1.4"/><rect x="6.5" y="5" width="1.6" height="1.4"/><rect x="1.4" y="7.6" width="1.6" height="1.4"/><rect x="4" y="7.6" width="1.6" height="1.4"/><rect x="6.5" y="7.6" width="1.6" height="1.4"/></g></svg>
<svg style="position:absolute;left:130px;top:871.5px;" width="10" height="7.5" viewBox="0 0 10 7.5"><rect x="0.6" y="0.6" width="8.8" height="6.3" fill="none" stroke="#8a949b" stroke-width="1.2"/><path d="M1.5 6.2 L4 3.6 L5.6 5 L6.8 3.8 L8.6 6.2 Z" fill="#8a949b"/><rect x="1.5" y="1.6" width="2" height="1.6" fill="#8a949b"/></svg>
<svg style="position:absolute;left:130px;top:905.0px;" width="13" height="9.5" viewBox="0 0 13 9.5"><g fill="none" stroke="#8a949b" stroke-width="1.3"><path d="M0 3.8 H5 M2.5 3.8 V9.5"/><path d="M5.5 0.7 H13 M9.25 0.7 V9.5"/></g></svg>
<svg style="position:absolute;left:130px;top:939.5px;" width="8" height="10" viewBox="0 0 8 10"><path d="M0 0 H5 L8 3 V10 H0 Z" fill="#8a949b"/><path d="M5 0 V3 H8" fill="#f0f3f5"/></svg>
<svg style="position:absolute;left:130px;top:975px;" width="9" height="9" viewBox="0 0 9 9"><g fill="none" stroke="#8a949b" stroke-width="1.2"><rect x="0.6" y="0.6" width="3.2" height="3.2"/><rect x="5.2" y="0.6" width="3.2" height="3.2"/><rect x="0.6" y="5.2" width="3.2" height="3.2"/></g><g fill="#8a949b"><rect x="5" y="5" width="1.5" height="1.5"/><rect x="7.5" y="7.5" width="1.5" height="1.5"/><rect x="7.5" y="5" width="1.5" height="1.5"/><rect x="5" y="7.5" width="1.5" height="1.5"/></g></svg>
<svg style="position:absolute;left:130px;top:1010.5px;" width="10" height="10" viewBox="0 0 10 10"><path d="M0.5 9.5 L7.5 2.5" stroke="#8a949b" stroke-width="1.6"/><path d="M1 1 L2 2 M8.5 6.5 L9.5 7.5 M4 0 V1.5" stroke="#8a949b" stroke-width="1"/></svg>
<div class="t" style="left:95.5px;top:67.0px;height:16px;line-height:16px;font-size:11.5px;font-weight:700;color:#ffffff;letter-spacing:-0.626px;">Undo</div>
<div class="t" style="left:181.0px;top:67.0px;height:16px;line-height:16px;font-size:11.5px;font-weight:700;color:#8b9197;letter-spacing:-0.917px;">Redo</div>
<div class="t" style="left:282.0px;top:67.0px;height:16px;line-height:16px;font-size:11.5px;font-weight:700;color:#ffffff;letter-spacing:-1.119px;">Save</div>
<div class="t" style="left:344.0px;top:67.0px;height:16px;line-height:16px;font-size:11.5px;font-weight:700;color:#ffffff;letter-spacing:-0.588px;">Publish</div>
<div class="t" style="left:416.0px;top:67.0px;height:16px;line-height:16px;font-size:11.5px;font-weight:700;color:#ffffff;letter-spacing:-0.264px;">Test</div>
<div class="t" style="left:764.0px;top:65.5px;height:20px;line-height:20px;font-size:14.5px;font-weight:400;color:#d7dadc;letter-spacing:0.045px;">Contractor Agreement</div>
<div class="t" style="left:1277.5px;top:69.5px;height:15px;line-height:15px;font-size:11px;font-weight:400;color:#80868b;letter-spacing:-0.060px;">Find in Template</div>
<div class="t" style="left:1648.6px;top:66.9px;height:16px;line-height:16px;font-size:11.5px;font-weight:700;color:#ffffff;letter-spacing:-0.479px;">Learn</div>
<div class="t" style="left:328.8px;top:99.0px;height:16px;line-height:16px;font-size:11.5px;font-weight:700;color:#2f3438;letter-spacing:0.016px;">payment_ongoing</div>
<div class="t" style="left:521.0px;top:98.8px;height:16px;line-height:16px;font-size:11.5px;font-weight:700;color:#3c4247;letter-spacing:-0.033px;">Conditions</div>
<div class="t" style="left:620.5px;top:98.8px;height:16px;line-height:16px;font-size:11.5px;font-weight:700;color:#6d757b;letter-spacing:0.203px;">Default Values</div>
<div class="t" style="left:743.8px;top:98.8px;height:16px;line-height:16px;font-size:11.5px;font-weight:700;color:#6d757b;letter-spacing:-0.019px;">Repeat</div>
<div class="t" style="left:823.0px;top:98.8px;height:16px;line-height:16px;font-size:11.5px;font-weight:700;color:#6d757b;letter-spacing:-0.329px;">Tags</div>
<div class="t" style="left:889.5px;top:98.8px;height:16px;line-height:16px;font-size:11.5px;font-weight:700;color:#6d757b;letter-spacing:0.069px;">Properties</div>
<div class="t" style="left:988.0px;top:98.8px;height:16px;line-height:16px;font-size:11.5px;font-weight:700;color:#6d757b;letter-spacing:0.027px;">Help</div>
<div class="t" style="left:1054.5px;top:98.8px;height:16px;line-height:16px;font-size:11.5px;font-weight:700;color:#6d757b;letter-spacing:-0.268px;">Design</div>
<div class="t" style="left:319.0px;top:132.0px;height:20px;line-height:20px;font-size:14.5px;font-weight:400;color:#6b7075;letter-spacing:0.020px;">Add selected Article to the document if:</div>
<div class="t" style="left:576.2px;top:132.0px;height:20px;line-height:20px;font-size:14.5px;font-weight:700;color:#33383c;letter-spacing:-0.155px;">Question</div>
<div class="t" style="left:655.5px;top:132.0px;height:20px;line-height:20px;font-size:14.5px;font-weight:400;color:#6b7075;letter-spacing:0.157px;">in template</div>
<div class="t" style="left:732.5px;top:132.0px;height:20px;line-height:20px;font-size:14.5px;font-weight:700;color:#33383c;letter-spacing:0.019px;">Contractor Agreement</div>
<div class="t" style="left:904.5px;top:132.0px;height:20px;line-height:20px;font-size:14.5px;font-weight:400;color:#6b7075;letter-spacing:-0.021px;">named</div>
<div class="t" style="left:953.0px;top:132.0px;height:20px;line-height:20px;font-size:14.5px;font-weight:700;color:#33383c;letter-spacing:0.084px;">i-want-to-use-this-agreement-for</div>
<div class="t" style="left:1196.0px;top:132.0px;height:20px;line-height:20px;font-size:14.5px;font-weight:400;color:#6b7075;letter-spacing:-0.121px;">is set to</div>
<div class="t" style="left:1263.6px;top:132.0px;height:20px;line-height:20px;font-size:14.5px;font-weight:700;color:#33383c;letter-spacing:-0.479px;">Ongoing Services</div>
<div class="t" style="left:1407.5px;top:134.7px;height:16px;line-height:16px;font-size:11.5px;font-weight:700;color:#62a265;letter-spacing:0.115px;">+ Next Condition</div>
<div class="t" style="left:146.0px;top:108.7px;height:16px;line-height:16px;font-size:11.5px;font-weight:700;color:#7a8a94;letter-spacing:-0.468px;">Popular</div>
<div class="t" style="left:229.5px;top:108.7px;height:16px;line-height:16px;font-size:11.5px;font-weight:700;color:#25292c;letter-spacing:-0.585px;">Full List</div>
<div class="t" style="left:119.0px;top:151.0px;height:12px;line-height:12px;font-size:8.3px;font-weight:700;color:#7b858c;letter-spacing:-0.058px;">CLAUSES</div>
<div class="t" style="left:119.0px;top:426.4px;height:12px;line-height:12px;font-size:8.3px;font-weight:700;color:#7b858c;letter-spacing:0.332px;">ELEMENTS</div>
<div class="t" style="left:139.0px;top:176.8px;height:15px;line-height:15px;font-size:11px;font-weight:700;color:#3b4146;letter-spacing:-0.264px;">Continuous Section</div>
<div class="t" style="left:138.5px;top:211.3px;height:15px;line-height:15px;font-size:11px;font-weight:700;color:#3b4146;letter-spacing:0.072px;">Title</div>
<div class="t" style="left:138.5px;top:245.8px;height:15px;line-height:15px;font-size:11px;font-weight:700;color:#3b4146;letter-spacing:-0.006px;">Article</div>
<div class="t" style="left:144.0px;top:280.3px;height:15px;line-height:15px;font-size:11px;font-weight:700;color:#3b4146;letter-spacing:-0.114px;">Paragraph</div>
<div class="t" style="left:148.8px;top:314.8px;height:15px;line-height:15px;font-size:11px;font-weight:700;color:#3b4146;letter-spacing:-0.161px;">Subparagraph</div>
<div class="t" style="left:154.5px;top:349.3px;height:15px;line-height:15px;font-size:11px;font-weight:700;color:#3b4146;letter-spacing:-0.124px;">Point</div>
<div class="t" style="left:159.5px;top:383.8px;height:15px;line-height:15px;font-size:11px;font-weight:700;color:#3b4146;letter-spacing:0.427px;">Item</div>
<div class="t" style="left:142.4px;top:454.3px;height:15px;line-height:15px;font-size:11px;font-weight:700;color:#3b4146;letter-spacing:-0.153px;">Question</div>
<div class="t" style="left:145.0px;top:488.8px;height:15px;line-height:15px;font-size:11px;font-weight:700;color:#3b4146;letter-spacing:-0.104px;">Table of Contents</div>
<div class="t" style="left:145.0px;top:523.3px;height:15px;line-height:15px;font-size:11px;font-weight:700;color:#3b4146;letter-spacing:-0.053px;">Table</div>
<div class="t" style="left:143.3px;top:557.8px;height:15px;line-height:15px;font-size:11px;font-weight:700;color:#3b4146;letter-spacing:0.133px;">Text</div>
<div class="t" style="left:139.7px;top:592.3px;height:15px;line-height:15px;font-size:11px;font-weight:700;color:#3b4146;letter-spacing:0.141px;">Text Input</div>
<div class="t" style="left:144.7px;top:626.8px;height:15px;line-height:15px;font-size:11px;font-weight:700;color:#3b4146;letter-spacing:-0.422px;">Select</div>
<div class="t" style="left:147.6px;top:661.3px;height:15px;line-height:15px;font-size:11px;font-weight:700;color:#3b4146;letter-spacing:-0.059px;">Money</div>
<div class="t" style="left:143.5px;top:695.8px;height:15px;line-height:15px;font-size:11px;font-weight:700;color:#3b4146;letter-spacing:0.019px;">Date</div>
<div class="t" style="left:142.4px;top:730.3px;height:15px;line-height:15px;font-size:11px;font-weight:700;color:#3b4146;letter-spacing:-0.178px;">Switcher</div>
<div class="t" style="left:143.5px;top:764.8px;height:15px;line-height:15px;font-size:11px;font-weight:700;color:#3b4146;letter-spacing:0.014px;">Button</div>
<div class="t" style="left:144.7px;top:799.3px;height:15px;line-height:15px;font-size:11px;font-weight:700;color:#3b4146;letter-spacing:-0.204px;">Link</div>
<div class="t" style="left:143.5px;top:833.8px;height:15px;line-height:15px;font-size:11px;font-weight:700;color:#3b4146;letter-spacing:-0.129px;">Calculation</div>
<div class="t" style="left:144.7px;top:868.3px;height:15px;line-height:15px;font-size:11px;font-weight:700;color:#3b4146;letter-spacing:-0.073px;">Image</div>
<div class="t" style="left:147.6px;top:902.8px;height:15px;line-height:15px;font-size:11px;font-weight:700;color:#3b4146;letter-spacing:-0.287px;">Rich Text</div>
<div class="t" style="left:142.4px;top:937.3px;height:15px;line-height:15px;font-size:11px;font-weight:700;color:#3b4146;letter-spacing:-0.131px;">Page Number</div>
<div class="t" style="left:143.5px;top:972.3px;height:15px;line-height:15px;font-size:11px;font-weight:700;color:#3b4146;letter-spacing:-0.709px;">QR Code</div>
<div class="t" style="left:144.7px;top:1008.3px;height:15px;line-height:15px;font-size:11px;font-weight:700;color:#3b4146;letter-spacing:-0.252px;">Dynamic Clause</div>
<div class="t" style="left:68.0px;top:126.0px;height:12px;line-height:12px;font-size:8.5px;font-weight:400;color:#50565b;letter-spacing:-0.417px;">Clauses &amp;</div>
<div class="t" style="left:69.3px;top:136.0px;height:12px;line-height:12px;font-size:8.5px;font-weight:400;color:#50565b;letter-spacing:-0.347px;">Elements</div>
<div class="t" style="left:62.9px;top:193.5px;height:12px;line-height:12px;font-size:8.5px;font-weight:400;color:#959ba0;letter-spacing:-0.154px;">Conditions &amp;</div>
<div class="t" style="left:71.7px;top:203.6px;height:12px;line-height:12px;font-size:8.5px;font-weight:400;color:#959ba0;letter-spacing:-0.510px;">Repeats</div>
<div class="t" style="left:73.4px;top:261.0px;height:12px;line-height:12px;font-size:8.5px;font-weight:400;color:#959ba0;letter-spacing:-0.114px;">Library</div>
<div class="t" style="left:70.0px;top:317.7px;height:12px;line-height:12px;font-size:8.5px;font-weight:400;color:#959ba0;letter-spacing:-0.157px;">Versions</div>
<div class="t" style="left:68.8px;top:374.6px;height:12px;line-height:12px;font-size:8.5px;font-weight:400;color:#959ba0;letter-spacing:-0.084px;">Template</div>
<div class="t" style="left:75.3px;top:432.0px;height:12px;line-height:12px;font-size:8.5px;font-weight:400;color:#959ba0;letter-spacing:-0.241px;">Editor</div>
<div class="t" style="left:71.2px;top:442.0px;height:12px;line-height:12px;font-size:8.5px;font-weight:400;color:#959ba0;letter-spacing:-0.230px;">Settings</div>
<div class="t" style="left:69.3px;top:498.7px;height:12px;line-height:12px;font-size:8.5px;font-weight:400;color:#959ba0;letter-spacing:-0.215px;">Translate</div>
<div class="t" style="left:650.4px;top:182.6px;height:13px;line-height:13px;font-size:9px;font-weight:700;color:#5e5a4a;letter-spacing:-0.066px;">Edit</div>
<div class="t" style="left:679.8px;top:182.6px;height:13px;line-height:13px;font-size:9px;font-weight:700;color:#5e5a4a;letter-spacing:-0.100px;">Actions</div>
<div class="t" style="left:1133.2px;top:182.6px;height:13px;line-height:13px;font-size:9px;font-weight:700;color:#5e5a4a;letter-spacing:0.135px;">Insert existing article</div>
<div class="t" style="left:658.0px;top:206.8px;height:22px;line-height:22px;font-size:16px;font-weight:400;color:#3a3d40;letter-spacing:0.000px;">5</div>
<div class="t" style="left:710.7px;top:206.0px;height:23px;line-height:23px;font-size:16.5px;font-weight:700;color:#161819;letter-spacing:0.105px;">Payment Conditions</div>
<div class="t" style="left:608.9px;top:263.8px;height:16px;line-height:16px;font-size:11.5px;font-weight:700;color:#5d656c;letter-spacing:0.060px;">Will the Client pay a deposit before the Services starts?</div>
<div class="t" style="left:1062.6px;top:263.5px;height:18px;line-height:18px;font-size:13px;font-weight:400;color:#50555a;letter-spacing:-1.104px;">Yes</div>
<div class="t" style="left:1096.0px;top:263.5px;height:18px;line-height:18px;font-size:13px;font-weight:400;color:#50555a;letter-spacing:-0.618px;">No</div>
<div class="t" style="left:1127.0px;top:263.5px;height:18px;line-height:18px;font-size:13px;font-weight:400;color:#c5c9cc;letter-spacing:0.082px;font-style:italic;">New response</div>
<div class="t" style="left:657.8px;top:331.7px;height:18px;line-height:18px;font-size:13px;font-weight:400;color:#505559;letter-spacing:-1.161px;">5.1</div>
<div class="t" style="left:710.2px;top:331.7px;height:18px;line-height:18px;font-size:13px;font-weight:400;color:#505559;letter-spacing:0.327px;">A deposit of</div>
<div class="t" style="left:843.5px;top:331.7px;height:18px;line-height:18px;font-size:13px;font-weight:400;color:#505559;letter-spacing:0.294px;">will be payable by Client before Contractor provides Client</div>
<div class="t" style="left:709.4px;top:358.0px;height:18px;line-height:18px;font-size:13px;font-weight:400;color:#505559;letter-spacing:0.006px;">with the Services</div>
<div class="t" style="left:657.8px;top:406.0px;height:18px;line-height:18px;font-size:13px;font-weight:400;color:#505559;letter-spacing:-0.561px;">5.2</div>
<div class="t" style="left:710.0px;top:406.0px;height:18px;line-height:18px;font-size:13px;font-weight:400;color:#505559;letter-spacing:0.119px;">Client will be invoiced every</div>
<div class="t" style="left:882.5px;top:406.0px;height:18px;line-height:18px;font-size:13px;font-weight:400;color:#222;letter-spacing:0.053px;">invocing_period</div>
<div class="t" style="left:657.8px;top:454.7px;height:18px;line-height:18px;font-size:13px;font-weight:400;color:#505559;letter-spacing:-0.561px;">5.3</div>
<div class="t" style="left:710.0px;top:454.7px;height:18px;line-height:18px;font-size:13px;font-weight:400;color:#505559;letter-spacing:0.000px;word-spacing:4.36px;">Invoices submitted by Contractor to Client are due within</div>
<div class="t" style="left:1074.4px;top:454.7px;height:18px;line-height:18px;font-size:13px;font-weight:400;color:#333;letter-spacing:0.424px;">number</div>
<div class="t" style="left:1149.0px;top:454.7px;height:18px;line-height:18px;font-size:13px;font-weight:400;color:#505559;letter-spacing:0.000px;word-spacing:3.49px;">days of</div>
<div class="t" style="left:710.0px;top:480.5px;height:18px;line-height:18px;font-size:13px;font-weight:400;color:#505559;letter-spacing:0.063px;">receipt</div>
<div class="t" style="left:657.5px;top:534.5px;height:22px;line-height:22px;font-size:16px;font-weight:400;color:#3a3d40;letter-spacing:0.000px;">6</div>
<div class="t" style="left:710.0px;top:533.5px;height:23px;line-height:23px;font-size:16.5px;font-weight:700;color:#161819;letter-spacing:0.046px;">Reimbursement of Expenses</div>
<div class="t" style="left:657.8px;top:579.6px;height:18px;line-height:18px;font-size:13px;font-weight:400;color:#505559;letter-spacing:-0.561px;">6.1</div>
<div class="t" style="left:710.0px;top:579.6px;height:18px;line-height:18px;font-size:13px;font-weight:400;color:#505559;letter-spacing:0.257px;">Contractor</div>
<div class="t" style="left:784.2px;top:579.6px;height:18px;line-height:18px;font-size:13px;font-weight:400;color:#222;letter-spacing:0.153px;">reimbursement_select</div>
<div class="t" style="left:938.0px;top:579.6px;height:18px;line-height:18px;font-size:13px;font-weight:400;color:#505559;letter-spacing:0.000px;word-spacing:8.79px;">reimbursed for</div>
<div class="t" style="left:1033.6px;top:579.6px;height:18px;line-height:18px;font-size:13px;font-weight:400;color:#505559;letter-spacing:0.000px;word-spacing:7.88px;">reimbursed from time to</div>
<div class="t" style="left:710.0px;top:605.5px;height:18px;line-height:18px;font-size:13px;font-weight:400;color:#505559;letter-spacing:0.380px;">time for</div>
<div class="t" style="left:767.4px;top:605.5px;height:18px;line-height:18px;font-size:13px;font-weight:400;color:#222;letter-spacing:-0.117px;">expenses_select</div>
<div class="t" style="left:884.7px;top:605.5px;height:18px;line-height:18px;font-size:13px;font-weight:400;color:#505559;letter-spacing:0.063px;">reasonable and necessary expenses (the '</div>
<div class="t" style="left:1135.6px;top:605.5px;height:18px;line-height:18px;font-size:13px;font-weight:700;color:#161819;letter-spacing:-0.472px;">Expenses</div>
<div class="t" style="left:710.0px;top:631.5px;height:18px;line-height:18px;font-size:13px;font-weight:400;color:#505559;letter-spacing:0.356px;">') incurred by Contractor in connection with providing the Services</div>
<div class="t" style="left:1113.5px;top:631.5px;height:18px;line-height:18px;font-size:13px;font-weight:400;color:#505559;letter-spacing:0.071px;">any expenses</div>
<div class="t" style="left:710.0px;top:657.0px;height:18px;line-height:18px;font-size:13px;font-weight:400;color:#505559;letter-spacing:0.166px;">incurred by Contractor in connection with providing the Services</div>
<div class="t" style="left:657.8px;top:697.2px;height:18px;line-height:18px;font-size:13px;font-weight:400;color:#505559;letter-spacing:-0.441px;">6.1.1</div>
<div class="t" style="left:712.6px;top:697.2px;height:18px;line-height:18px;font-size:13px;font-weight:400;color:#333;letter-spacing:0.313px;">description</div>
<div class="t" style="left:788.0px;top:697.2px;height:18px;line-height:18px;font-size:13px;font-weight:400;color:#505559;letter-spacing:0.000px;">;</div>
<div class="t" style="left:719.4px;top:745.3px;height:18px;line-height:18px;font-size:13px;font-weight:700;color:#ffffff;letter-spacing:-0.175px;">Add Expence</div>
<div class="t" style="left:657.8px;top:802.2px;height:18px;line-height:18px;font-size:13px;font-weight:400;color:#505559;letter-spacing:-0.561px;">6.2</div>
<div class="t" style="left:710.0px;top:802.2px;height:18px;line-height:18px;font-size:13px;font-weight:400;color:#505559;letter-spacing:-0.050px;">Any other Expenses</div>
<div class="t" style="left:828.8px;top:802.2px;height:18px;line-height:18px;font-size:13px;font-weight:400;color:#505559;letter-spacing:-0.355px;">The Expenses</div>
<div class="t" style="left:918.8px;top:802.2px;height:18px;line-height:18px;font-size:13px;font-weight:400;color:#333;letter-spacing:-0.846px;font-style:italic;">Select</div>
<div class="t" style="left:972.5px;top:802.2px;height:18px;line-height:18px;font-size:13px;font-weight:400;color:#505559;letter-spacing:0.121px;">be pre-approved by Client</div>
<div class="t" style="left:657.5px;top:856.8px;height:22px;line-height:22px;font-size:16px;font-weight:400;color:#3a3d40;letter-spacing:0.000px;">7</div>
<div class="t" style="left:710.0px;top:856.0px;height:23px;line-height:23px;font-size:16.5px;font-weight:700;color:#161819;letter-spacing:0.406px;">Confidential Information</div>
<div class="t" style="left:709.4px;top:1005.2px;height:18px;line-height:18px;font-size:13px;font-weight:400;color:#505559;letter-spacing:0.198px;">Information is the exclusive property of the Client</div>
<div class="t" style="left:710.8px;top:1052.7px;height:20px;line-height:20px;font-size:14px;font-weight:400;color:#505559;letter-spacing:0.229px;">Example default text</div>
<div class="t" style="left:1277.7px;top:232.6px;height:12px;line-height:12px;font-size:8.5px;font-weight:400;color:#644509;letter-spacing:0.283px;">Question</div>
<div class="t" style="left:1317.2px;top:232.6px;height:12px;line-height:12px;font-size:8.5px;font-weight:700;color:#644509;letter-spacing:0.197px;">I want to use t... = Ongoing</div>
<div class="t" style="left:1277.7px;top:244.4px;height:12px;line-height:12px;font-size:8.5px;font-weight:700;color:#644509;letter-spacing:0.107px;">Service...</div>
<div class="t" style="left:1274.0px;top:332.6px;height:12px;line-height:12px;font-size:8.5px;font-weight:400;color:#644509;letter-spacing:0.354px;">Question</div>
<div class="t" style="left:1313.4px;top:332.6px;height:12px;line-height:12px;font-size:8.5px;font-weight:700;color:#644509;letter-spacing:0.176px;">Will the Client... = Yes</div>
<div class="t" style="left:1270.8px;top:697.5px;height:12px;line-height:12px;font-size:8.5px;font-weight:400;color:#644509;letter-spacing:0.015px;">Select</div>
<div class="t" style="left:1297.0px;top:697.5px;height:12px;line-height:12px;font-size:8.5px;font-weight:700;color:#644509;letter-spacing:0.121px;">expenses_select = following</div>
<div class="t" style="left:1270.8px;top:745.9px;height:12px;line-height:12px;font-size:8.5px;font-weight:400;color:#644509;letter-spacing:0.015px;">Select</div>
<div class="t" style="left:1297.0px;top:745.9px;height:12px;line-height:12px;font-size:8.5px;font-weight:700;color:#644509;letter-spacing:0.121px;">expenses_select = following</div>
<div class="t" style="left:1274.0px;top:797.0px;height:12px;line-height:12px;font-size:8.5px;font-weight:400;color:#644509;letter-spacing:0.075px;">Select</div>
<div class="t" style="left:1300.5px;top:797.0px;height:12px;line-height:12px;font-size:8.5px;font-weight:700;color:#644509;letter-spacing:0.228px;">reimbursement_s... = will not</div>
<div class="t" style="left:1274.0px;top:808.8px;height:12px;line-height:12px;font-size:8.5px;font-weight:700;color:#644509;letter-spacing:0.081px;">be</div>
<div class="t" style="left:1286.5px;top:808.8px;height:12px;line-height:12px;font-size:8.5px;font-weight:400;color:#644509;letter-spacing:0.159px;">and</div>
<div class="t" style="left:1303.0px;top:808.8px;height:12px;line-height:12px;font-size:8.5px;font-weight:400;color:#644509;letter-spacing:0.075px;">Select</div>
<div class="t" style="left:1329.5px;top:808.8px;height:12px;line-height:12px;font-size:8.5px;font-weight:700;color:#644509;letter-spacing:0.112px;">expenses_select =</div>
</body></html>
